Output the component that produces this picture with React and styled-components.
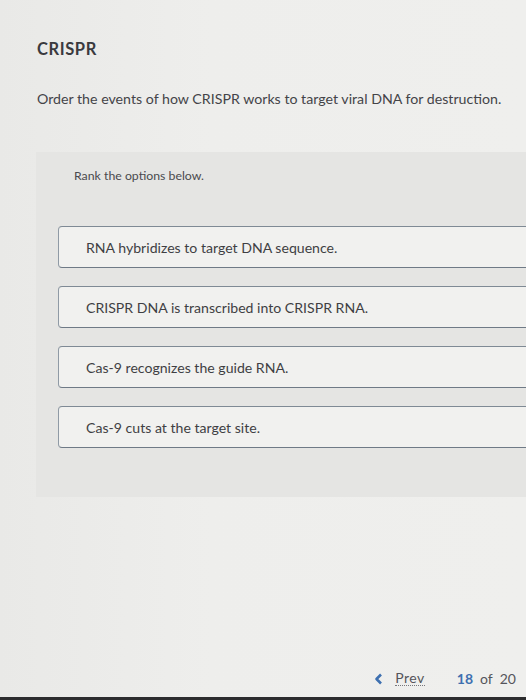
import React from "react";
import styled, { createGlobalStyle } from "styled-components";

const Global = createGlobalStyle`
  html, body { margin: 0; padding: 0; }
  body {
    background: #ecebe9;
    font-family: Lato, "Open Sans", sans-serif;
    color: #3d3d40;
    width: 526px;
    height: 700px;
    overflow: hidden;
  }
`;

const Page = styled.div`
  position: relative;
  width: 526px;
  height: 700px;
  display: flex;
  flex-direction: column;
  padding-top: 39px;
  box-sizing: border-box;
  background: linear-gradient(90deg, #e9e9e7 0%, #eeeeec 40%, #efefed 100%);
`;

const Title = styled.h1`
  margin: 0 0 0 37px;
  font-size: 16.5px;
  line-height: 20px;
  font-weight: 700;
  letter-spacing: 0.6px;
  color: #3a3a3e;
`;

const Question = styled.p`
  margin: 30px 0 0 37px;
  font-size: 14.2px;
  line-height: 20px;
  color: #444448;
  white-space: nowrap;
`;

const Panel = styled.section`
  margin: 43px 0 0 36px;
  height: 345px;
  background: #e5e5e3;
  display: flex;
  flex-direction: column;
  padding: 15px 0 0 22px;
  box-sizing: border-box;
`;

const Instruction = styled.div`
  margin-left: 16px;
  font-size: 12.3px;
  line-height: 18px;
  color: #4a4a4e;
`;

const Options = styled.ol`
  list-style: none;
  margin: 41px 0 0 0;
  padding: 0;
  display: flex;
  flex-direction: column;
  gap: 18px;
`;

const Option = styled.li`
  height: 42px;
  box-sizing: border-box;
  margin-right: -10px;
  border: 1px solid #8f9aa5;
  border-top-color: #7f8a95;
  border-bottom: 1.5px solid #6f7a86;
  border-radius: 4px;
  background: #f1f1ef;
  display: flex;
  align-items: center;
  padding-left: 27px;
  font-size: 14.1px;
  color: #3f3f43;
`;

const Footer = styled.nav`
  margin-top: auto;
  margin-bottom: 10px;
  display: flex;
  justify-content: flex-end;
  align-items: center;
  padding-right: 10px;
  font-size: 14px;
  color: #55555a;
`;

const PrevLink = styled.span`
  display: flex;
  align-items: center;
  gap: 12px;
  margin-right: 32px;
`;

const PrevText = styled.span`
  border-bottom: 1px dotted #77777c;
  line-height: 14px;
  letter-spacing: 0.5px;
`;

const Count = styled.span`
  display: flex;
  gap: 7px;
`;

const Current = styled.b`
  color: #3e70b0;
  font-weight: 700;
`;

const BottomEdge = styled.div`
  height: 3px;
  background: #2c2c2e;
`;

const Chevron = () => (
  <svg width="9" height="12" viewBox="0 0 9 12">
    <path d="M7 1.5 L2.5 6 L7 10.5" fill="none" stroke="#3e70b0" strokeWidth="2.6" strokeLinejoin="round" />
  </svg>
);

const items = [
  "RNA hybridizes to target DNA sequence.",
  "CRISPR DNA is transcribed into CRISPR RNA.",
  "Cas-9 recognizes the guide RNA.",
  "Cas-9 cuts at the target site.",
];

export default function App() {
  return (
    <>
      <Global />
      <Page>
        <Title>CRISPR</Title>
        <Question>Order the events of how CRISPR works to target viral DNA for destruction.</Question>
        <Panel>
          <Instruction>Rank the options below.</Instruction>
          <Options>
            {items.map((t) => (
              <Option key={t}>{t}</Option>
            ))}
          </Options>
        </Panel>
        <Footer>
          <PrevLink>
            <Chevron />
            <PrevText>Prev</PrevText>
          </PrevLink>
          <Count>
            <Current>18</Current>
            <span>of</span>
            <span>20</span>
          </Count>
        </Footer>
        <BottomEdge />
      </Page>
    </>
  );
}
